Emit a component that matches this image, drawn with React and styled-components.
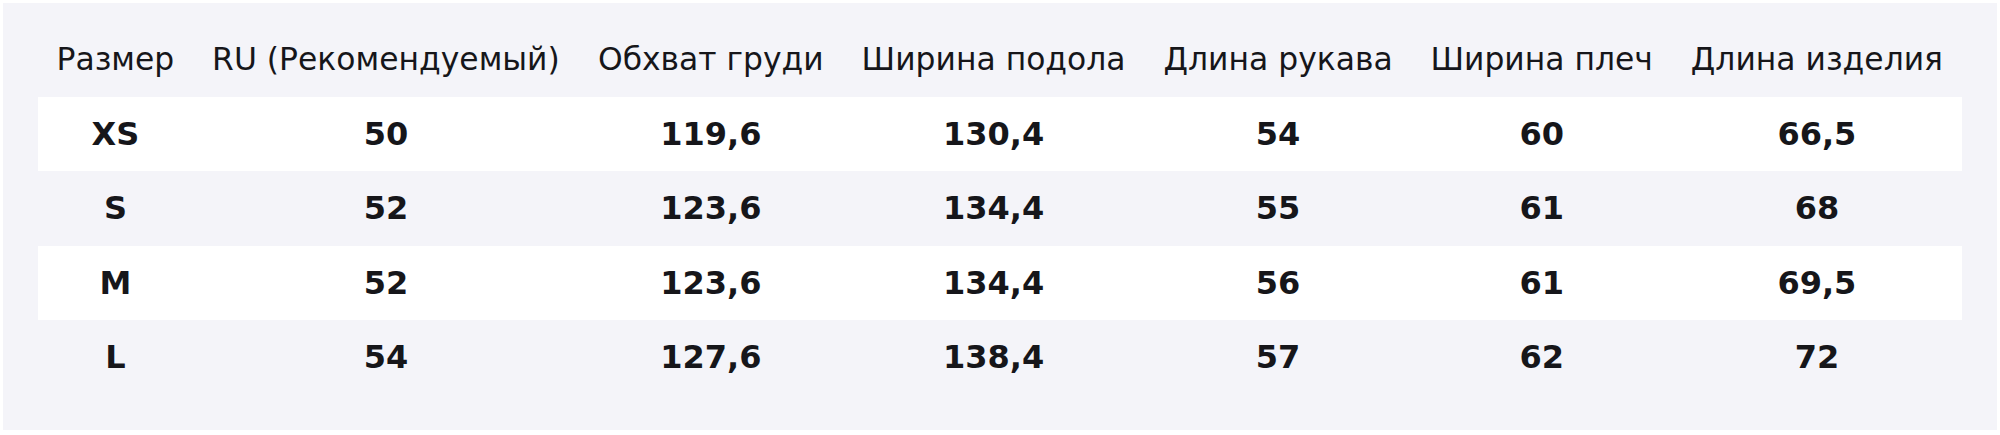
import React from "react";
import styled, { createGlobalStyle } from "styled-components";

const Global = createGlobalStyle`
  html, body { margin: 0; padding: 0; background: #ffffff; }
  body { margin: 3px; font-family: "DejaVu Sans", "Liberation Sans", sans-serif; }
`;

const Panel = styled.div`
  background: #f4f4f9;
  padding: 35px;
  box-sizing: border-box;
`;

const Table = styled.table`
  width: 100%;
  border-collapse: collapse;
  font-family: "DejaVu Sans", sans-serif;
  font-size: 31.4px;
  color: #16161a;
`;

const Th = styled.th`
  font-weight: normal;
  padding: 4px 18px 20px;
  text-align: center;
  white-space: nowrap;
  line-height: 34.5px;
`;

const Row = styled.tr`
  background: ${(p) => (p.$striped ? "#ffffff" : "transparent")};
`;

const Td = styled.td`
  font-weight: bold;
  font-size: 32px;
  padding: 20px 18px;
  text-align: center;
  white-space: nowrap;
  line-height: 34.5px;
`;

const headers = [
  "Размер",
  "RU (Рекомендуемый)",
  "Обхват груди",
  "Ширина подола",
  "Длина рукава",
  "Ширина плеч",
  "Длина изделия",
];

const rows = [
  ["XS", "50", "119,6", "130,4", "54", "60", "66,5"],
  ["S", "52", "123,6", "134,4", "55", "61", "68"],
  ["M", "52", "123,6", "134,4", "56", "61", "69,5"],
  ["L", "54", "127,6", "138,4", "57", "62", "72"],
];

export default function App() {
  return (
    <>
      <Global />
      <Panel>
        <Table>
          <thead>
            <tr>
              {headers.map((h) => (
                <Th key={h}>{h}</Th>
              ))}
            </tr>
          </thead>
          <tbody>
            {rows.map((r, i) => (
              <Row key={r[0]} $striped={i % 2 === 0}>
                {r.map((c, j) => (
                  <Td key={j}>{c}</Td>
                ))}
              </Row>
            ))}
          </tbody>
        </Table>
      </Panel>
    </>
  );
}
